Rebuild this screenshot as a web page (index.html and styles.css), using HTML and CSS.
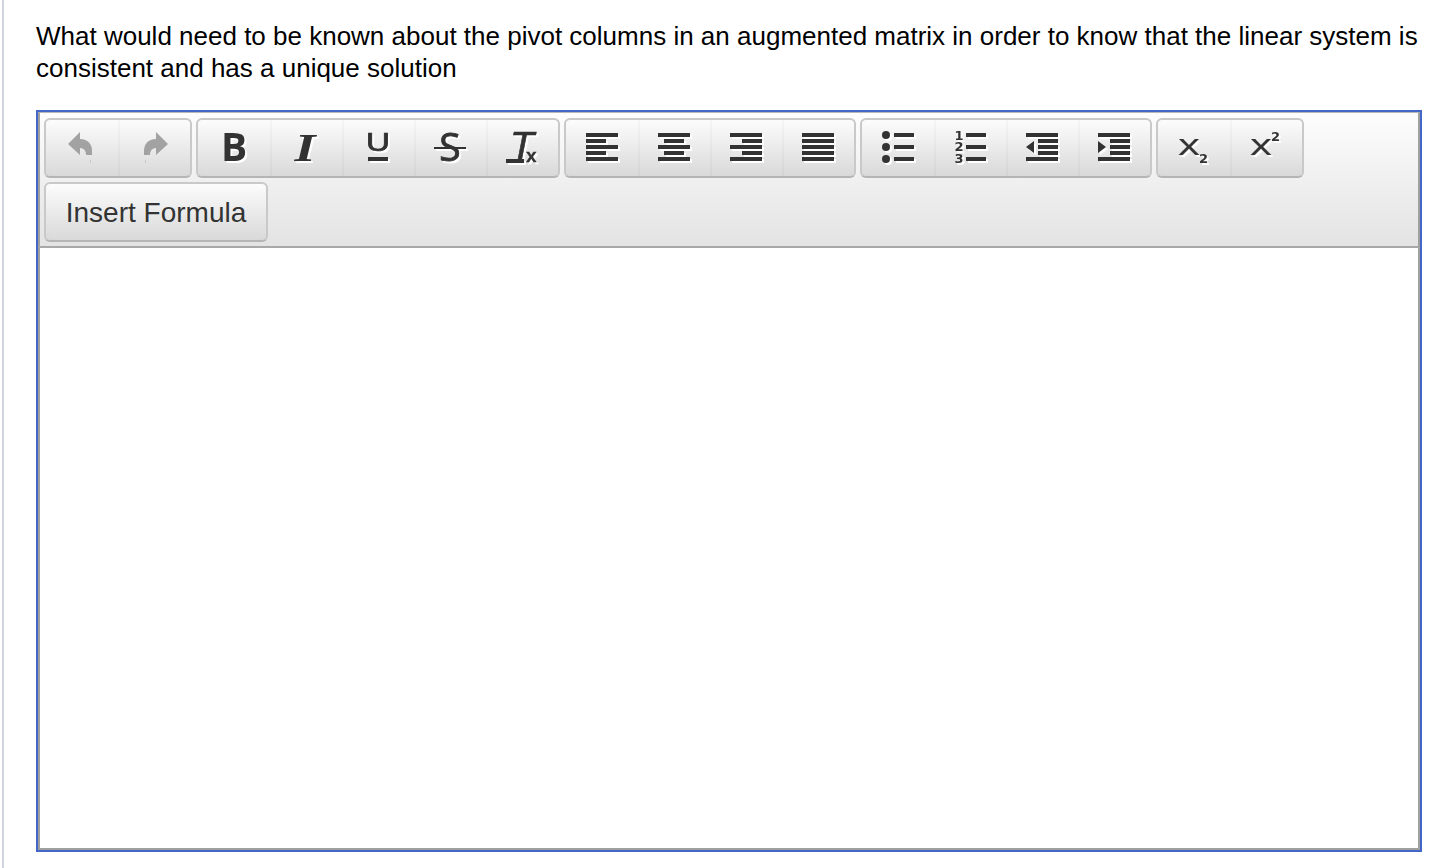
FILE: index.html
```html
<!DOCTYPE html>
<html lang="en">
<head>
<meta charset="utf-8">
<title>Question</title>
<link rel="stylesheet" href="styles.css">
</head>
<body>
<main class="page">
  <p class="question">What would need to be known about the pivot columns in an augmented matrix in order to know that the linear system is consistent and has a unique solution</p>
  <section class="editor">
    <div class="toolbar">
      <div class="group">
        <button class="btn" aria-label="Undo"><svg class="icon dim" viewBox="0 0 32 32"><path d="M2 13 14 1v7c8 0 12 5 12 12v4h-6c0-4-2-7-6-7v7z"/><rect class="speck" x="24" y="29" width="1" height="3"/></svg></button>
        <button class="btn" aria-label="Redo"><svg class="icon dim" viewBox="0 0 32 32"><path d="M30 13 18 1v7C10 8 6 13 6 20v4h6c0-4 2-7 6-7v7z"/><rect class="speck" x="7" y="29" width="1" height="3"/></svg></button>
      </div>
      <div class="group">
        <button class="btn" aria-label="Bold"><svg class="icon" viewBox="0 0 32 32"><text class="t-bold" x="16" y="30" text-anchor="middle">B</text></svg></button>
        <button class="btn" aria-label="Italic"><svg class="icon" viewBox="0 0 32 32"><text class="t-italic" x="15" y="30" text-anchor="middle" textLength="21" lengthAdjust="spacingAndGlyphs">I</text></svg></button>
        <button class="btn" aria-label="Underline"><svg class="icon" viewBox="0 0 32 32"><text class="t-under" x="16" y="20" text-anchor="middle" textLength="24" lengthAdjust="spacingAndGlyphs">U</text><rect x="6" y="26" width="20" height="4"/></svg></button>
        <button class="btn" aria-label="Strikethrough"><svg class="icon" viewBox="0 0 32 32"><text class="t-strike" x="16" y="30" text-anchor="middle">S</text><rect x="0" y="16" width="32" height="2"/></svg></button>
        <button class="btn" aria-label="Clear formatting"><svg class="icon" viewBox="0 0 32 32"><text class="t-clear"><tspan x="4" y="28" textLength="24" lengthAdjust="spacingAndGlyphs">T</tspan><tspan class="t-clear-x" x="20" y="31">x</tspan></text><rect x="0" y="28" width="18" height="4"/></svg></button>
      </div>
      <div class="group">
        <button class="btn" aria-label="Align left"><svg class="icon" viewBox="0 0 32 32"><path d="M0 2h32v4H0zM0 8h20v4H0zM0 14h32v4H0zM0 20h20v4H0zM0 26h32v4H0z"/></svg></button>
        <button class="btn" aria-label="Align center"><svg class="icon" viewBox="0 0 32 32"><path d="M0 2h32v4H0zM6 8h20v4H6zM0 14h32v4H0zM6 20h20v4H6zM0 26h32v4H0z"/></svg></button>
        <button class="btn" aria-label="Align right"><svg class="icon" viewBox="0 0 32 32"><path d="M0 2h32v4H0zM12 8h20v4H12zM0 14h32v4H0zM12 20h20v4H12zM0 26h32v4H0z"/></svg></button>
        <button class="btn" aria-label="Justify"><svg class="icon" viewBox="0 0 32 32"><path d="M0 2h32v4H0zM0 8h32v4H0zM0 14h32v4H0zM0 20h32v4H0zM0 26h32v4H0z"/></svg></button>
      </div>
      <div class="group">
        <button class="btn" aria-label="Bullet list"><svg class="icon" viewBox="0 0 32 32"><circle cx="4" cy="4" r="4"/><circle cx="4" cy="16" r="4"/><circle cx="4" cy="28" r="4"/><path d="M12 2h20v4H12zM12 14h20v4H12zM12 26h20v4H12z"/></svg></button>
        <button class="btn" aria-label="Numbered list"><svg class="icon" viewBox="0 0 32 32"><text class="t-num" text-anchor="middle"><tspan x="5" y="9">1</tspan><tspan x="5" y="20">2</tspan><tspan x="5" y="32">3</tspan></text><path d="M12 2h20v4H12zM12 14h20v4H12zM12 26h20v4H12z"/></svg></button>
        <button class="btn" aria-label="Decrease indent"><svg class="icon" viewBox="0 0 32 32"><path d="M0 2h32v4H0zM12 8h20v4H12zM12 14h20v4H12zM12 20h20v4H12zM0 26h32v4H0zM8 10v12L0 16z"/></svg></button>
        <button class="btn" aria-label="Increase indent"><svg class="icon" viewBox="0 0 32 32"><path d="M0 2h32v4H0zM12 8h20v4H12zM12 14h20v4H12zM12 20h20v4H12zM0 26h32v4H0zM0 10v12l8-6z"/></svg></button>
      </div>
      <div class="group">
        <button class="btn" aria-label="Subscript"><svg class="icon" viewBox="0 0 32 32"><text class="t-x" x="0" y="24" textLength="22" lengthAdjust="spacingAndGlyphs">x</text><text class="t-num" x="21" y="32">2</text></svg></button>
        <button class="btn" aria-label="Superscript"><svg class="icon" viewBox="0 0 32 32"><text class="t-x" x="0" y="24" textLength="22" lengthAdjust="spacingAndGlyphs">x</text><text class="t-num" x="21" y="10">2</text></svg></button>
      </div>
      <div class="group">
        <button class="btn btn-text">Insert Formula</button>
      </div>
    </div>
    <div class="area"></div>
  </section>
</main>
</body>
</html>
```
FILE: styles.css
```css
* { box-sizing: border-box; }
html, body { margin: 0; height: 868px; overflow: hidden; background: #fff; }
.page {
  margin-left: 2px;
  height: 868px;
  border-left: 2px solid #d0d4e0;
  padding: 20px 28px 0 32px;
  font-family: "Liberation Sans", Arial, sans-serif;
  color: #000;
}
.question {
  margin: 0 0 26px;
  font-size: 26px;
  line-height: 32px;
}
.editor {
  display: flex;
  flex-direction: column;
  width: 1386px;
  height: 742px;
  border: 2px solid #4267c9;
  background: #fff;
}
.toolbar {
  display: flex;
  flex-wrap: wrap;
  align-content: flex-start;
  gap: 4px;
  padding: 5px 4px 4px;
  border: 2px solid #a0a0a0;
  border-top: 1px solid #b8b8b8;
  border-bottom: 2px solid #a8a8a8;
  background: linear-gradient(#fdfdfd, #e3e3e3);
}
.group {
  display: flex;
  border: 2px solid #c9c9c9;
  border-bottom-color: #b5b5b5;
  border-radius: 6px;
  background: linear-gradient(#fcfcfc, #d9d9d9);
  overflow: hidden;
}
.btn {
  display: flex;
  align-items: center;
  justify-content: center;
  width: 72px;
  height: 56px;
  margin: 0;
  padding: 0 0 2px;
  border: 0;
  box-shadow: inset 2px 0 0 rgba(0, 0, 0, 0.022);
  background: transparent;
  color: #333;
}
.btn:first-child { box-shadow: none; }
.btn-text {
  width: 220px;
  padding: 2px 0 0;
  font-family: "Liberation Sans", Arial, sans-serif;
  font-size: 28px;
  color: #333;
}
.icon {
  display: block;
  width: 32px;
  height: 32px;
  overflow: visible;
  fill: #333;
  filter: drop-shadow(2px 2px 0 #fff);
}
.icon.dim { fill: #a2a2a2; filter: none; }
.speck { opacity: 0.45; }
.t-bold { font: 700 39px "Open Sans", sans-serif; }
.t-italic { font: italic 700 41px "Liberation Serif", serif; }
.t-under { font: 400 25px "Liberation Sans", sans-serif; stroke: #333; stroke-width: 0.7px; }
.t-strike { font: 400 39px "Open Sans", sans-serif; stroke: #333; stroke-width: 0.9px; }
.t-clear { font: italic 400 39px "Liberation Sans", sans-serif; stroke: #333; stroke-width: 0.7px; }
.t-clear-x { font: normal 700 19px "Liberation Sans", sans-serif; stroke-width: 0.3px; }
.t-num { font: 700 13px "DejaVu Sans", sans-serif; }
.t-x { font: 400 30px "Open Sans", sans-serif; stroke: #333; stroke-width: 0.2px; }
.area { flex: 1; border: 2px solid #a0a0a0; border-top: 0; background: #fff; }
```
